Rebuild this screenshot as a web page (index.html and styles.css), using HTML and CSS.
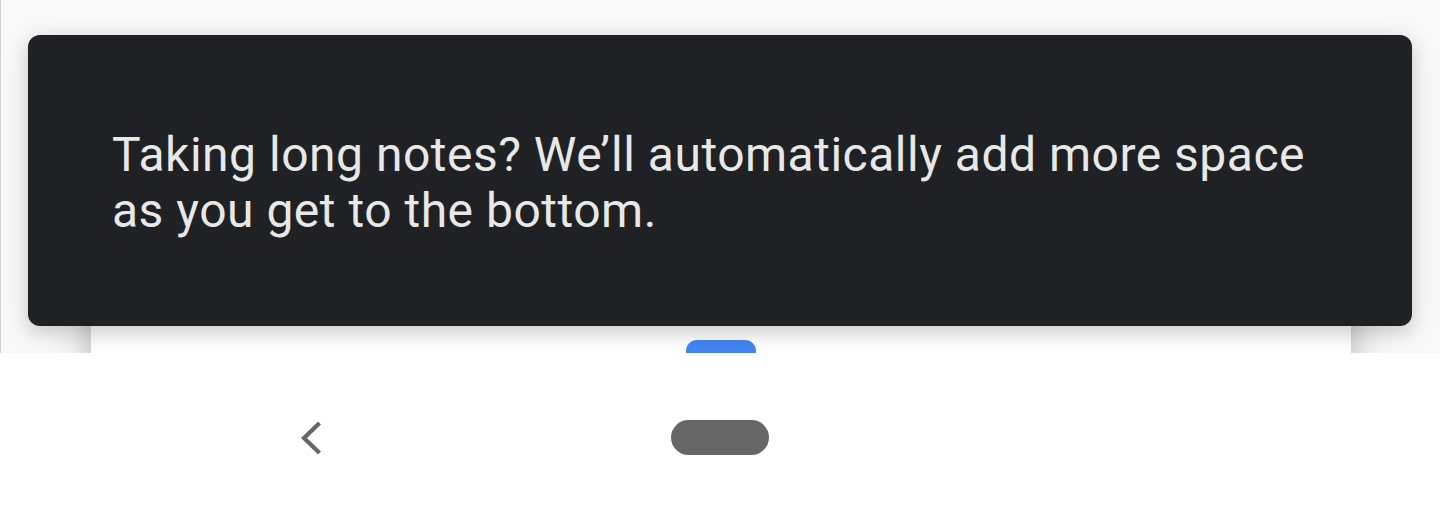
FILE: index.html
```html
<!DOCTYPE html>
<html lang="en">
<head>
<meta charset="utf-8">
<title>Toast</title>
<link rel="stylesheet" href="styles.css">
</head>
<body>
<div class="screen">
  <div class="page">
    <div class="card">
      <div class="tab"></div>
    </div>
    <div class="toast">
      <p class="toast-text">Taking long notes? We’ll automatically add more space as you get to the bottom.</p>
    </div>
  </div>
  <nav class="navbar">
    <div class="nav-left">
      <svg class="back" width="24" height="36" viewBox="0 0 24 36" aria-hidden="true">
        <path d="M19 4.5 L5 18 L19 31.5" fill="none" stroke="#666666" stroke-width="4.2" stroke-linecap="square" stroke-linejoin="miter"/>
      </svg>
    </div>
    <div class="home"></div>
    <div class="nav-right"></div>
  </nav>
</div>
</body>
</html>
```

FILE: styles.css
```css
html, body {
  margin: 0;
  padding: 0;
  background: #ffffff;
}

.screen {
  width: 1440px;
  height: 522px;
  display: flex;
  flex-direction: column;
  overflow: hidden;
}

.page {
  position: relative;
  height: 353px;
  flex: none;
  background: #f9f9f9;
  border-left: 1px solid #d4d4d4;
  box-sizing: border-box;
  overflow: hidden;
  display: flex;
  justify-content: center;
  align-items: flex-end;
}

.card {
  width: 1260px;
  height: 300px;
  margin-bottom: -40px;
  background: #ffffff;
  box-shadow: 0 0 34px rgba(0, 0, 0, 0.28);
  display: flex;
  justify-content: center;
  align-items: flex-end;
  padding-bottom: 40px;
  box-sizing: border-box;
}

.tab {
  width: 70px;
  height: 13px;
  background: #4285f4;
  border-radius: 11px 11px 0 0;
  margin-left: 1px;
}

.toast {
  position: absolute;
  left: 27px;
  top: 35px;
  width: 1384px;
  height: 291px;
  box-sizing: border-box;
  background: #202124;
  border-radius: 12px;
  box-shadow: 0 6px 22px rgba(0, 0, 0, 0.22);
  padding: 92px 80px 0 84px;
}

.toast-text {
  margin: 0;
  font-family: Roboto, "Noto Sans", sans-serif;
  font-size: 48px;
  line-height: 56px;
  letter-spacing: 0.5px;
  color: #e8e8e9;
  font-weight: 400;
}

.navbar {
  flex: 1;
  background: #ffffff;
  display: grid;
  grid-template-columns: 1fr auto 1fr;
  align-items: center;
}

.nav-left {
  display: flex;
  align-items: center;
  padding-left: 299px;
}

.back {
  display: block;
}

.home {
  width: 98px;
  height: 35px;
  border-radius: 18px;
  background: #666666;
}
```
